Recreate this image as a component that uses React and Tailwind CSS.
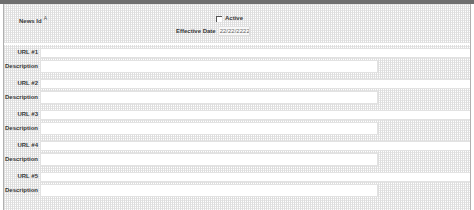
import React from "react";

const dots =
  "bg-white bg-[image:linear-gradient(90deg,#dedede_1px,transparent_1px),linear-gradient(#e6e6e6_1px,transparent_1px)] bg-[length:2px_2px]";

function Row({ n }) {
  return (
    <div className="flex flex-col">
      <div className="flex items-center h-[11px] mt-[2px]">
        <div className="w-[36px] shrink-0 text-right pr-[2px] font-bold text-[6px] text-[#383838]">URL #{n}</div>
        <div className="flex-1 h-[10px] bg-white border-t border-b border-l border-[#e2e2e2]"></div>
      </div>
      <div className="flex items-center h-[13px] mt-[2px]">
        <div className="w-[36px] shrink-0 pl-[1px] font-bold text-[6px] text-[#383838] whitespace-nowrap">Description</div>
        <div className="w-[338px] h-[13px] bg-white border border-[#e2e2e2]"></div>
      </div>
    </div>
  );
}

export default function App() {
  return (
    <div className="w-[474px] h-[210px] bg-white overflow-hidden" style={{ fontFamily: '"Liberation Sans", Arial, sans-serif' }}>
      <div className="h-[4px] bg-[#6e6e6e]"></div>
      <div className={`ml-[3px] mr-[3px] h-[206px] border-l border-r border-[#b0b0b0] ${dots}`}>
        <div className="h-[41px] relative border-b-2 border-white">
          <div className="absolute left-[15px] top-[13px] flex items-start gap-[2px]">
            <span className="font-bold text-[6px] text-[#383838]">News Id</span>
            <span className="text-[5px] text-[#555] leading-none -mt-[1px]">A</span>
          </div>
          <div className="absolute left-[212px] top-[10px] flex items-center gap-[3px]">
            <div className="w-[6px] h-[6px] border-l border-t border-[#555] bg-white"></div>
            <span className="font-bold text-[6px] text-[#383838]">Active</span>
          </div>
          <div className="absolute left-[172px] top-[22px] flex items-center gap-[2px]">
            <span className="font-bold text-[6px] text-[#383838]">Effective Date</span>
            <div className="w-[32px] h-[10px] bg-[#f8f8f8] border border-[#e0e0e0] text-[6px] text-[#666] leading-[8px] px-[1px] overflow-hidden whitespace-nowrap">22/22/2222</div>
          </div>
        </div>
        <div className="flex flex-col gap-[3px]">
          <Row n={1} />
          <Row n={2} />
          <Row n={3} />
          <Row n={4} />
          <Row n={5} />
        </div>
      </div>
    </div>
  );
}
